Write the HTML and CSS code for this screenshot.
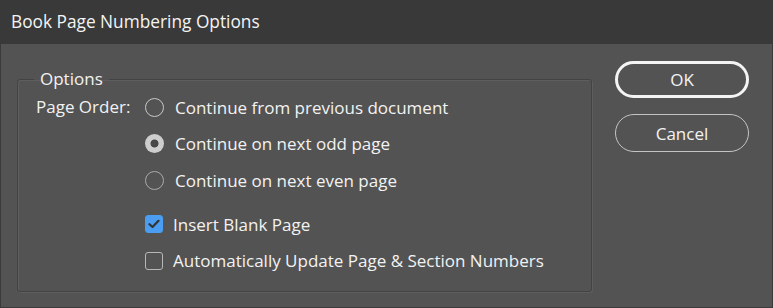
FILE: index.html
```html
<!DOCTYPE html>
<html>
<head>
<meta charset="utf-8">
<link rel="stylesheet" href="styles.css">
</head>
<body>
<div class="window">
  <div class="titlebar">Book Page Numbering Options</div>
  <div class="content">
    <fieldset class="group">
      <legend class="legend">Options</legend>
      <div class="order">
        <div class="order-label">Page Order:</div>
        <div class="choices">
          <div class="row radio-row"><span class="radio"></span><span>Continue from previous document</span></div>
          <div class="row radio-row"><span class="radio on"></span><span>Continue on next odd page</span></div>
          <div class="row radio-row"><span class="radio"></span><span>Continue on next even page</span></div>
          <div class="checks">
            <div class="row check-row"><span class="check on"><svg width="12" height="10" viewBox="0 0 12 10"><path d="M1.5 5.2 L4.5 8 L10.5 1.8" fill="none" stroke="#333" stroke-width="2.2" stroke-linecap="round" stroke-linejoin="round"/></svg></span><span>Insert Blank Page</span></div>
            <div class="row check-row"><span class="check"></span><span>Automatically Update Page &amp; Section Numbers</span></div>
          </div>
        </div>
      </div>
    </fieldset>
    <div class="buttons">
      <button class="btn primary">OK</button>
      <button class="btn">Cancel</button>
    </div>
  </div>
</div>
</body>
</html>
```
FILE: styles.css
```css
* { box-sizing: border-box; }
html, body { margin: 0; padding: 0; background: #535353; }
body { font-family: "Open Sans", "Noto Sans", sans-serif; color: #f2f2f2; font-size: 17px; }
.window {
  width: 773px;
  height: 308px;
  background: #535353;
  border: 1px solid #3a3a3a;
  border-top: none;
  display: flex;
  flex-direction: column;
}
.titlebar {
  height: 44px;
  background: #393939;
  padding-left: 11px;
  line-height: 44px;
  font-size: 17.3px;
  color: #f4f4f4;
  margin: 0 -1px;
}
.content {
  display: flex;
  align-items: flex-start;
  padding-left: 16px;
}
.group {
  margin: 24px 0 0 0;
  width: 575px;
  height: 224px;
  border: 1px solid #434343;
  box-shadow: 1px 1px 0 #5e5e5e, inset 1px 1px 0 #5e5e5e;
  border-radius: 3px;
  padding: 7px 0 0 18px;
}
.legend {
  padding: 0 6px;
  margin-left: -2px;
  font-size: 17px;
  line-height: 22px;
}
.order { display: flex; }
.order-label { width: 109px; line-height: 20px; }
.choices { display: flex; flex-direction: column; }
.row { display: flex; align-items: center; height: 20px; white-space: nowrap; }
.radio-row { margin-bottom: 16.5px; }
.radio-row:nth-child(3) { margin-bottom: 0; }
.checks { margin-top: 24px; display: flex; flex-direction: column; gap: 16.5px; }
.radio {
  width: 19px; height: 19px;
  border: 1.5px solid #c9c9c9;
  border-radius: 50%;
  margin-right: 11px;
  flex: none;
}
.radio.on {
  border: none;
  background: radial-gradient(circle, #474747 0 3.6px, #cdcdcd 4.4px);
}
.radio-row:nth-child(3) .radio { border-color: #aaaaaa; }
.check {
  width: 18px; height: 18px;
  border: 1.5px solid #b7b7b7;
  border-radius: 3px;
  margin-right: 10px;
  flex: none;
  display: flex; align-items: center; justify-content: center;
}
.check.on { background: #4a9df0; border-color: #4a9df0; }
.buttons {
  display: flex;
  flex-direction: column;
  gap: 16px;
  margin: 17px 0 0 23px;
}
.btn {
  width: 134px;
  height: 38px;
  border-radius: 19px;
  background: transparent;
  color: #f4f4f4;
  font-family: "Open Sans", "Noto Sans", sans-serif;
  font-size: 17px;
  border: 1px solid #c4c4c4;
  padding: 0;
}
.btn.primary { border: 3px solid #f4f4f4; height: 37px; }
```
